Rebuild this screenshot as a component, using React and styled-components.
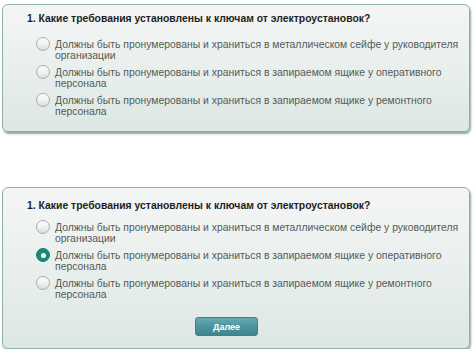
import React from "react";
import styled, { createGlobalStyle } from "styled-components";

const GlobalStyle = createGlobalStyle`
    body {
        margin: 0;
        background: #ffffff;
        font-family: "Liberation Sans", Arial, sans-serif;
    }
`;

const Page = styled.div`
    display: flex;
    flex-direction: column;
    gap: 55px;
    padding: 4px 4px 0 2px;
    width: 474px;
    box-sizing: border-box;
`;

const Card = styled.div`
    border: 1px solid #8fb0a9;
    border-radius: 6px;
    background: linear-gradient(180deg, #f4f6f5 0%, #e9efed 50%, #dde7e4 100%);
    box-shadow: 1px 2px 2px rgba(70, 110, 100, 0.6);
    padding: ${(p) => (p.$withButton ? "11px 2px 12px 24px" : "7px 2px 14px 24px")};
    width: 468px;
    box-sizing: border-box;
`;

const Question = styled.div`
    font-family: "Liberation Sans", Arial, sans-serif;
    font-size: 10.4px;
    font-weight: 700;
    line-height: 14px;
    color: #1e1e1e;
    margin-bottom: ${(p) => (p.$withButton ? "9px" : "13px")};
`;

const Options = styled.div`
    display: flex;
    flex-direction: column;
    gap: 6px;
    padding-left: 9px;
`;

const Option = styled.label`
    display: flex;
    align-items: flex-start;
    gap: 5px;
`;

const Radio = styled.span`
    flex: none;
    width: 14px;
    height: 14px;
    margin-top: -2px;
    border-radius: 50%;
    box-sizing: border-box;
    display: flex;
    align-items: center;
    justify-content: center;
    border: 1px solid ${(p) => (p.$checked ? "#17806f" : "#a9adac")};
    background: ${(p) =>
        p.$checked
            ? "#198a78"
            : "linear-gradient(180deg, #ffffff 0%, #f0f2f1 50%, #d9dddc 100%)"};

    &::after {
        content: "";
        display: ${(p) => (p.$checked ? "block" : "none")};
        width: 5px;
        height: 5px;
        border-radius: 50%;
        background: #ffffff;
    }
`;

const OptionText = styled.span`
    font-family: "Liberation Sans", Arial, sans-serif;
    font-size: 10.4px;
    line-height: 11px;
    color: #555a59;
`;

const Footer = styled.div`
    display: flex;
    justify-content: center;
    padding-right: 41px;
    margin-top: 17px;
`;

const NextButton = styled.button`
    width: 63px;
    height: 19px;
    border: 1px solid #3e7f89;
    border-radius: 3px;
    background: linear-gradient(180deg, #66a9b3 0%, #4a929d 55%, #3f8590 100%);
    color: #ffffff;
    font-family: "Liberation Sans", Arial, sans-serif;
    font-size: 9px;
    font-weight: 700;
    padding: 0;
    cursor: pointer;
`;

const answers = [
    "Должны быть пронумерованы и храниться в металлическом сейфе у руководителя организации",
    "Должны быть пронумерованы и храниться в запираемом ящике у оперативного персонала",
    "Должны быть пронумерованы и храниться в запираемом ящике у ремонтного персонала",
];

const QuestionCard = ({ selected, withButton }) => (
    <Card $withButton={withButton}>
        <Question $withButton={withButton}>
            1. Какие требования установлены к ключам от электроустановок?
        </Question>
        <Options>
            {answers.map((text, i) => (
                <Option key={i}>
                    <Radio $checked={selected === i} />
                    <OptionText>{text}</OptionText>
                </Option>
            ))}
        </Options>
        {withButton && (
            <Footer>
                <NextButton>Далее</NextButton>
            </Footer>
        )}
    </Card>
);

const App = () => (
    <>
        <GlobalStyle />
        <Page>
            <QuestionCard selected={-1} />
            <QuestionCard selected={1} withButton />
        </Page>
    </>
);

export default App;
